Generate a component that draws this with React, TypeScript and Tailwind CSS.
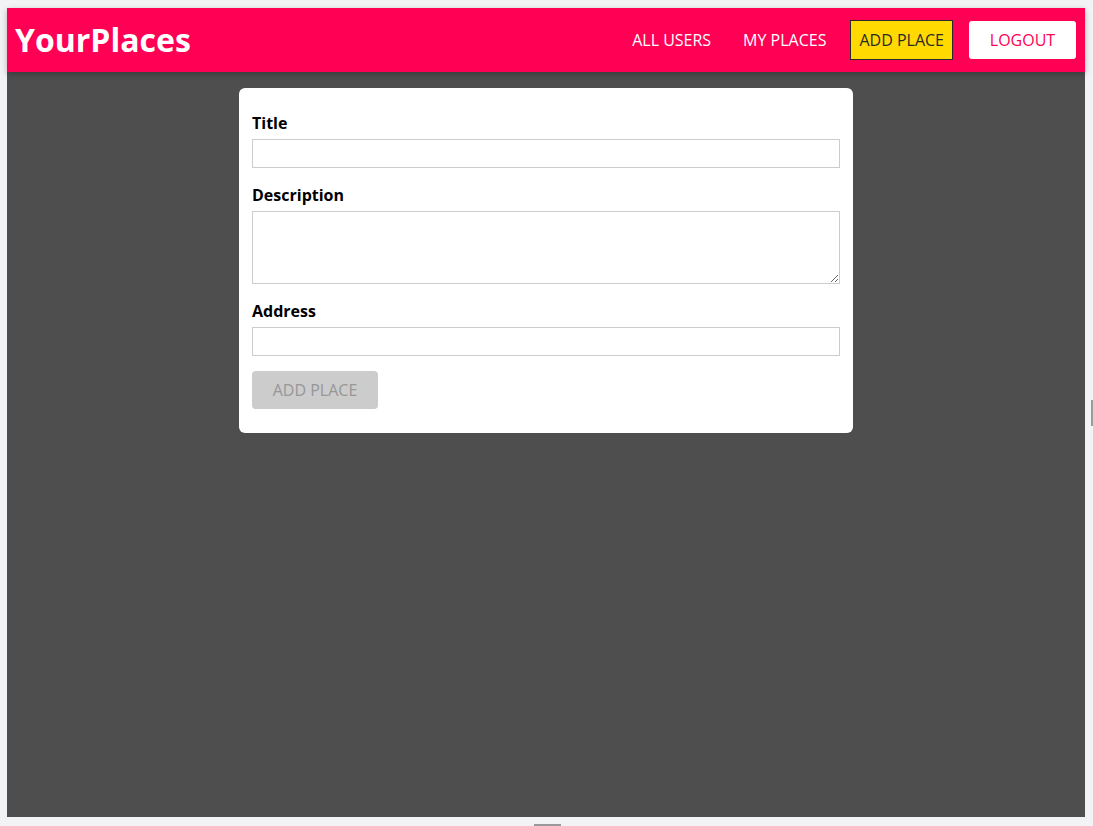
import React from "react";

const font = { fontFamily: '"Open Sans", "Noto Sans", sans-serif' };

const NavLink: React.FC<{ text: string; active?: boolean; className?: string }> = ({ text, active, className }) => (
    <li className={className ?? "mx-2"}>
        <a
            href="#"
            className={
                "block p-2 border leading-[22px] " +
                (active ? "bg-[#ffd900] border-[#292929] text-[#292929]" : "border-transparent text-white")
            }
        >
            {text}
        </a>
    </li>
);

const Field: React.FC<{ label: string; area?: boolean; className?: string }> = ({ label, area, className }) => (
    <div className={className ?? "mb-4"}>
        <label className="block font-bold text-base leading-[22px] text-black mb-[5px]">{label}</label>
        {area ? (
            <textarea className="block w-full h-[73px] border border-[#ccc] bg-white outline-none resize-y" />
        ) : (
            <input type="text" className="block w-full h-[29px] border border-[#ccc] bg-white outline-none" />
        )}
    </div>
);

export default function App() {
    return (
        <div className="relative w-full h-[826px] bg-[#f2f3f5] overflow-hidden" style={font}>
            <div className="absolute left-[7px] top-[8px] w-[1078px] h-[809px] bg-[#4e4e4e] flex flex-col">
                <header className="h-16 bg-[#ff0055] flex items-center justify-between pl-2 pr-[1px] shadow-[0_2px_6px_rgba(0,0,0,0.26)]">
                    <h1 className="text-[32px] font-bold text-white leading-none">YourPlaces</h1>
                    <ul className="flex items-center text-base">
                        <NavLink text="ALL USERS" className="ml-2 mr-[6px]" />
                        <NavLink text="MY PLACES" className="ml-2 mr-[7px]" />
                        <NavLink text="ADD PLACE" active />
                        <li className="mx-2">
                            <button className="h-[38px] w-[107px] bg-white text-[#ff0055] rounded-[3px] leading-[22px]">
                                LOGOUT
                            </button>
                        </li>
                    </ul>
                </header>
                <form className="mx-auto mt-4 w-[614px] bg-white rounded-[6px] px-[13px] pt-6 pb-6">
                    <Field label="Title" />
                    <Field label="Description" area />
                    <Field label="Address" className="mb-[15px]" />
                    <button
                        type="button"
                        disabled
                        className="h-[38px] w-[126px] bg-[#ccc] text-[#979797] rounded-[4px] text-base leading-[22px]"
                    >
                        ADD PLACE
                    </button>
                </form>
            </div>
            {/* viewport resize handles */}
            <div className="absolute right-0 top-[400px] w-[2px] h-[26px] bg-[#9a9a9a]" />
            <div className="absolute bottom-0 left-[534px] w-[27px] h-[2px] bg-[#9a9a9a]" />
        </div>
    );
}
